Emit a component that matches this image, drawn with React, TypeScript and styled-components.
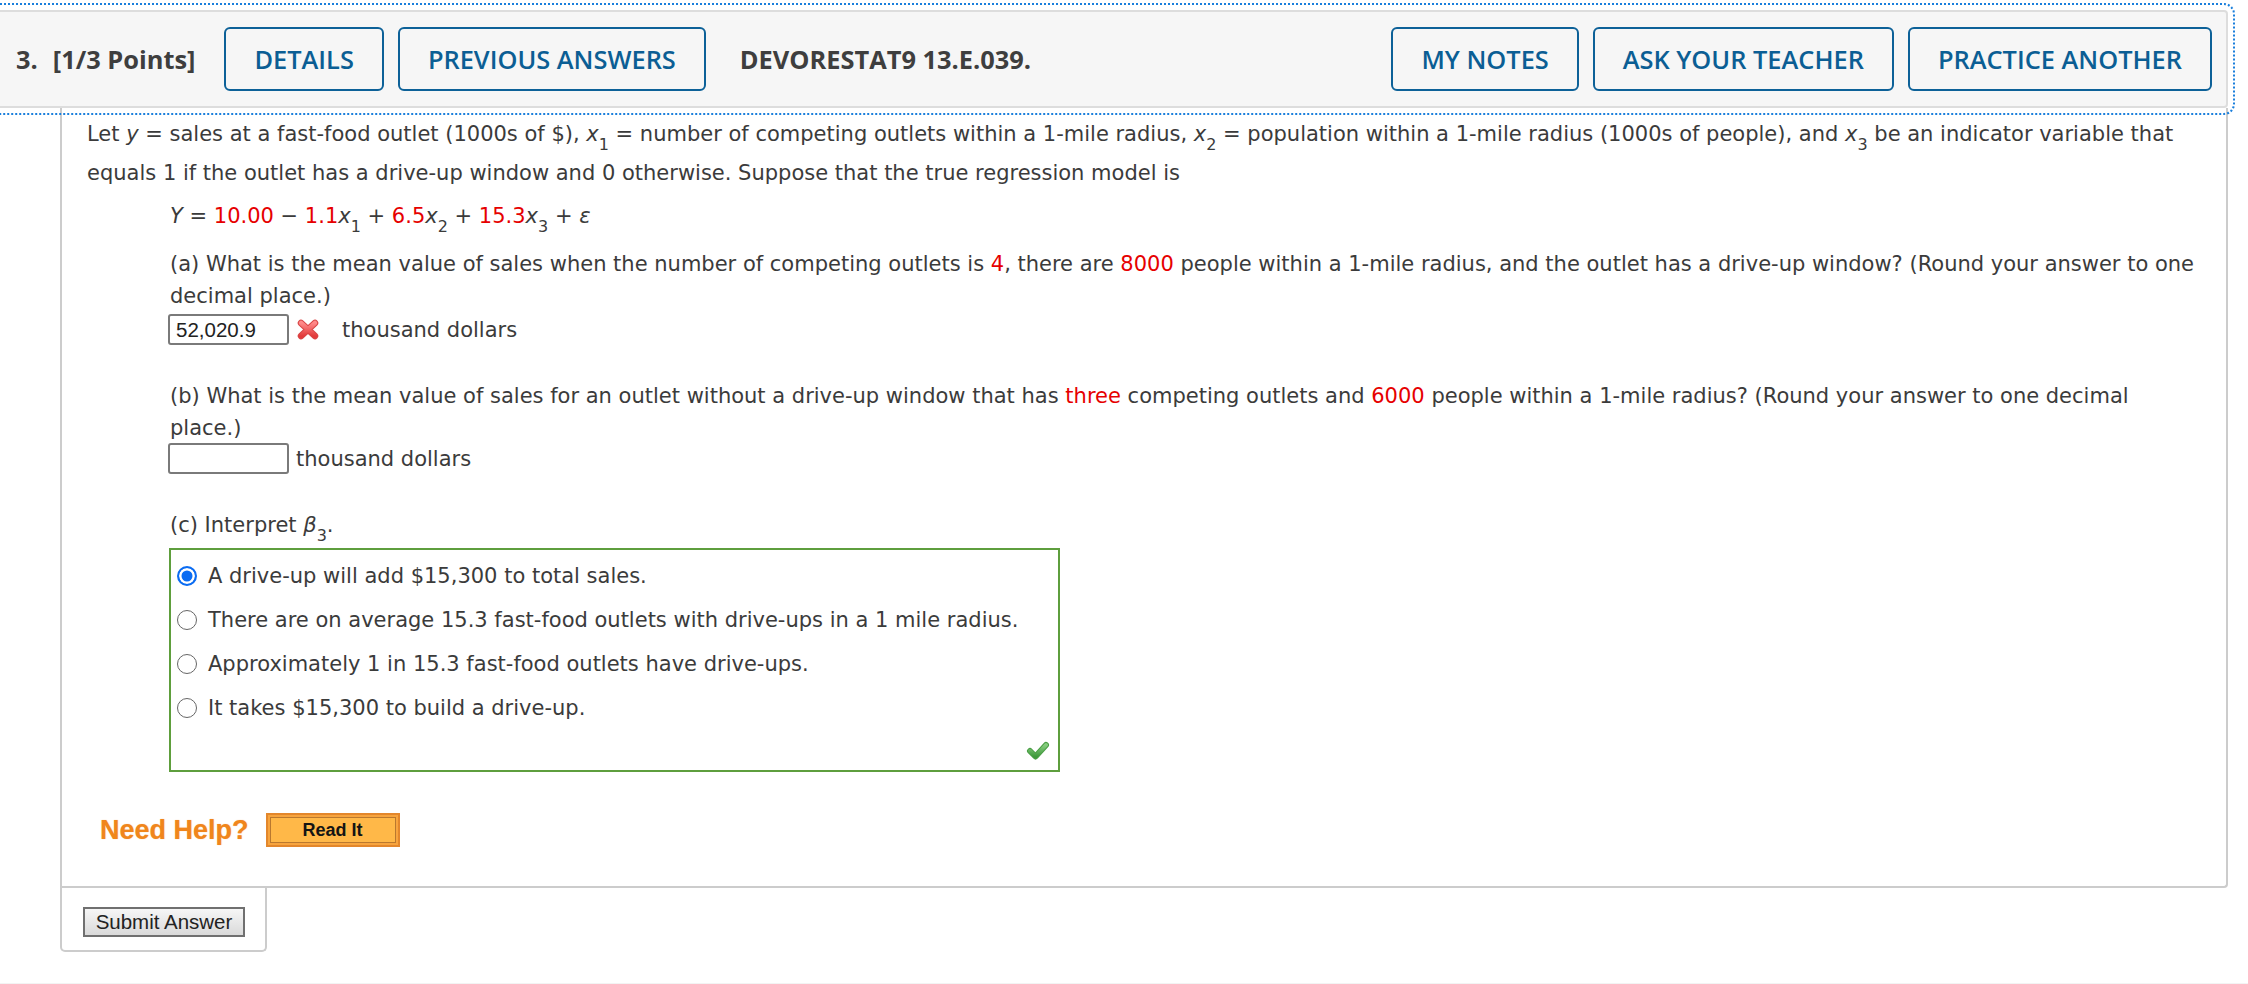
import React from 'react';
import styled, { createGlobalStyle } from 'styled-components';

const GlobalStyle = createGlobalStyle`
  html, body {
    margin: 0;
    padding: 0;
    background: #ffffff;
  }
  body {
    font-family: "DejaVu Sans", Verdana, sans-serif;
    color: #3b3b3b;
    overflow: hidden;
  }
`;

const choices = [
  { label: 'A drive-up will add $15,300 to total sales.', selected: true },
  { label: 'There are on average 15.3 fast-food outlets with drive-ups in a 1 mile radius.', selected: false },
  { label: 'Approximately 1 in 15.3 fast-food outlets have drive-ups.', selected: false },
  { label: 'It takes $15,300 to build a drive-up.', selected: false },
];

function WrongMark() {
  return (
    <svg width="24" height="21" viewBox="0 0 24 21">
      <defs>
        <linearGradient id="xg" x1="0" y1="0" x2="0" y2="1">
          <stop offset="0" stopColor="#ff8a8a" />
          <stop offset="1" stopColor="#e23b3b" />
        </linearGradient>
      </defs>
      <path d="M5 4 L19 17 M19 4 L5 17" stroke="#d84444" strokeWidth="6.5" strokeLinecap="round" />
      <path d="M5 4 L19 17 M19 4 L5 17" stroke="url(#xg)" strokeWidth="4.5" strokeLinecap="round" />
    </svg>
  );
}

function RightMark() {
  return (
    <svg width="24" height="21" viewBox="0 0 24 21">
      <defs>
        <linearGradient id="cg" x1="0" y1="0" x2="0" y2="1">
          <stop offset="0" stopColor="#86cc7e" />
          <stop offset="1" stopColor="#3f9a3c" />
        </linearGradient>
      </defs>
      <path d="M4 11 L9.5 16.5 L20 5" fill="none" stroke="#4a9e45" strokeWidth="6" strokeLinecap="round" strokeLinejoin="round" />
      <path d="M4 11 L9.5 16.5 L20 5" fill="none" stroke="url(#cg)" strokeWidth="4" strokeLinecap="round" strokeLinejoin="round" />
    </svg>
  );
}

export default function App() {
  return (
    <Page>
      <GlobalStyle />
      <QuestionHeader>
        <Points>
          <Num>3.</Num>[1/3 Points]
        </Points>
        <HeaderButton>DETAILS</HeaderButton>
        <HeaderButton>PREVIOUS ANSWERS</HeaderButton>
        <QuestionId>DEVORESTAT9 13.E.039.</QuestionId>
        <Spacer />
        <HeaderButton>MY NOTES</HeaderButton>
        <HeaderButton>ASK YOUR TEACHER</HeaderButton>
        <HeaderButton>PRACTICE ANOTHER</HeaderButton>
      </QuestionHeader>

      <Panel>
        <Intro>
          Let <Var>y</Var> = sales at a fast-food outlet (1000s of $), <Var>x</Var>
          <Sub>1</Sub> = number of competing outlets within a 1-mile radius, <Var>x</Var>
          <Sub>2</Sub> = population within a 1-mile radius (1000s of people), and <Var>x</Var>
          <Sub>3</Sub> be an indicator variable that equals 1 if the outlet has a drive-up window and 0
          otherwise. Suppose that the true regression model is
        </Intro>

        <Equation>
          <Var>Y</Var> = <Red>10.00</Red> − <Red>1.1</Red>
          <Var>x</Var>
          <Sub>1</Sub> + <Red>6.5</Red>
          <Var>x</Var>
          <Sub>2</Sub> + <Red>15.3</Red>
          <Var>x</Var>
          <Sub>3</Sub> + <Var>ε</Var>
        </Equation>

        <Part $top={16}>
          (a) What is the mean value of sales when the number of competing outlets is <Red>4</Red>, there are{' '}
          <Red>8000</Red> people within a 1-mile radius, and the outlet has a drive-up window? (Round your
          answer to one decimal place.)
        </Part>
        <AnswerRow $top={2}>
          <AnswerInput>52,020.9</AnswerInput>
          <MarkSlot>
            <WrongMark />
          </MarkSlot>
          <Unit $gap={22}>thousand dollars</Unit>
        </AnswerRow>

        <Part $top={35}>
          (b) What is the mean value of sales for an outlet without a drive-up window that has{' '}
          <Red>three</Red> competing outlets and <Red>6000</Red> people within a 1-mile radius? (Round your
          answer to one decimal place.)
        </Part>
        <AnswerRow $top={-1}>
          <AnswerInput />
          <Unit $gap={7}>thousand dollars</Unit>
        </AnswerRow>

        <Part $top={35}>
          (c) Interpret <Var>β</Var>
          <Sub>3</Sub>.
        </Part>

        <ChoiceBox>
          {choices.map((c) => (
            <ChoiceRow key={c.label}>
              <Radio $selected={c.selected} />
              <span>{c.label}</span>
            </ChoiceRow>
          ))}
          <CheckSlot>
            <RightMark />
          </CheckSlot>
        </ChoiceBox>

        <HelpRow>
          <NeedHelp>Need Help?</NeedHelp>
          <ReadIt>Read It</ReadIt>
        </HelpRow>
      </Panel>

      <SubmitTab>
        <SubmitButton>Submit Answer</SubmitButton>
      </SubmitTab>
      <Footer />
    </Page>
  );
}

const Page = styled.div`
  padding-top: 10px;
  width: 2248px;
  height: 984px;
  box-sizing: border-box;
`;

const QuestionHeader = styled.div`
  display: flex;
  align-items: center;
  gap: 14px;
  height: 98px;
  box-sizing: border-box;
  margin: 0 20px 0 -20px;
  padding: 0 14px 0 34px;
  background: #f6f6f6;
  border: 2px solid #dddddd;
  border-radius: 4px;
  outline: 2px dotted #1a7fdc;
  outline-offset: 5px;
  font-family: "Open Sans", "Liberation Sans", sans-serif;
  font-size: 25.4px;
`;

const Points = styled.div`
  font-weight: 700;
  color: #3e3e3e;
  margin-right: 15px;
  white-space: nowrap;
`;

const Num = styled.span`
  margin-right: 15px;
`;

const HeaderButton = styled.div`
  height: 64px;
  box-sizing: border-box;
  display: flex;
  align-items: center;
  padding: 0 28px;
  border: 2px solid #0d6198;
  border-radius: 6px;
  color: #0b5e94;
  font-weight: 600;
  white-space: nowrap;
`;

const QuestionId = styled.div`
  font-weight: 700;
  color: #3e3e3e;
  margin-left: 20px;
  white-space: nowrap;
`;

const Spacer = styled.div`
  flex: 1;
`;

const Panel = styled.div`
  margin: 0 20px 0 60px;
  padding: 7px 28px 39px 25px;
  border: 2px solid #cccccc;
  border-top: none;
  border-bottom-right-radius: 4px;
  font-size: 21px;
  color: #3b3b3b;
`;

const Intro = styled.div`
  line-height: 39px;
`;

const Var = styled.i`
  font-style: italic;
`;

const Sub = styled.sub`
  font-size: 16px;
  vertical-align: -9px;
  line-height: 0;
`;

const Red = styled.span`
  color: #e60000;
`;

const Equation = styled.div`
  margin: 7px 0 0 83px;
  line-height: 32px;
`;

const Part = styled.div<{ $top: number }>`
  margin: ${(p) => p.$top}px 0 0 83px;
  line-height: 32px;
`;

const AnswerRow = styled.div<{ $top: number }>`
  display: flex;
  align-items: center;
  margin: ${(p) => p.$top}px 0 0 81px;
  height: 31px;
`;

const AnswerInput = styled.div`
  width: 121px;
  height: 31px;
  box-sizing: border-box;
  border: 2px solid #7a7a7a;
  border-radius: 3px;
  padding: 0 6px;
  display: flex;
  align-items: center;
  font-family: "Liberation Sans", Arial, sans-serif;
  font-size: 20.5px;
  color: #222222;
  background: #ffffff;
`;

const MarkSlot = styled.span`
  display: flex;
  margin-left: 7px;
`;

const Unit = styled.span<{ $gap: number }>`
  margin-left: ${(p) => p.$gap}px;
`;

const ChoiceBox = styled.div`
  margin: 7px 0 0 82px;
  width: 891px;
  min-height: 224px;
  box-sizing: border-box;
  border: 2px solid #5e9e3d;
  padding: 4px 8px 9px 6px;
  display: flex;
  flex-direction: column;
`;

const ChoiceRow = styled.div`
  display: flex;
  align-items: center;
  gap: 11px;
  height: 44px;
`;

const Radio = styled.span<{ $selected: boolean }>`
  width: 20px;
  height: 20px;
  box-sizing: border-box;
  border-radius: 50%;
  flex-shrink: 0;
  border: ${(p) => (p.$selected ? '2px solid #0b6cf2' : '1.5px solid #666666')};
  background: ${(p) => (p.$selected ? '#0b6cf2' : '#ffffff')};
  box-shadow: ${(p) => (p.$selected ? 'inset 0 0 0 2.5px #ffffff' : 'none')};
`;

const CheckSlot = styled.div`
  margin-top: auto;
  align-self: flex-end;
  display: flex;
`;

const HelpRow = styled.div`
  display: flex;
  align-items: center;
  gap: 17px;
  margin: 41px 0 0 13px;
  height: 34px;
`;

const NeedHelp = styled.span`
  font-family: "Liberation Sans", Arial, sans-serif;
  font-weight: 700;
  font-size: 27px;
  color: #f0861c;
  text-shadow: 0 0 1px rgba(240, 134, 28, 0.6);
`;

const ReadIt = styled.div`
  width: 134px;
  height: 34px;
  box-sizing: border-box;
  border: 2px solid #e3872c;
  background: #ffb848;
  box-shadow: inset 0 0 0 2px #f7a43e, inset 0 0 0 3px #b9782f;
  display: flex;
  align-items: center;
  justify-content: center;
  font-family: "Liberation Sans", Arial, sans-serif;
  font-weight: 700;
  font-size: 18px;
  color: #141414;
`;

const SubmitTab = styled.div`
  margin-left: 60px;
  width: 207px;
  height: 64px;
  box-sizing: border-box;
  border: 2px solid #cccccc;
  border-top: none;
  border-radius: 0 0 5px 5px;
  padding: 19px 0 0 21px;
`;

const SubmitButton = styled.div`
  width: 162px;
  height: 30px;
  box-sizing: border-box;
  border: 2px solid #707070;
  background: linear-gradient(#f6f6f6, #dadada);
  display: flex;
  align-items: center;
  justify-content: center;
  font-family: "Liberation Sans", Arial, sans-serif;
  font-size: 20.5px;
  color: #222222;
`;

const Footer = styled.div`
  margin-top: 31px;
  height: 3px;
  background: #f3f3f3;
`;
